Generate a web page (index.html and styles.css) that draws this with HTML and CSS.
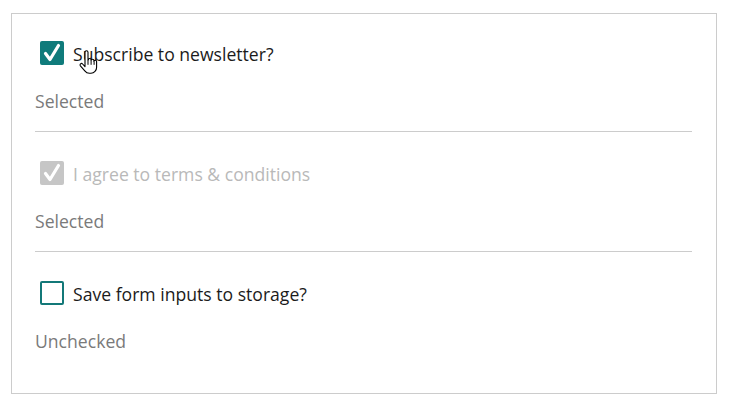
FILE: index.html
```html
<!DOCTYPE html>
<html lang="en">
<head>
<meta charset="utf-8">
<title>Checkboxes</title>
<link rel="stylesheet" href="styles.css">
</head>
<body>
<div class="card">
  <div class="item">
    <label class="check">
      <span class="box box-on">
        <svg viewBox="0 0 24 24" width="24" height="24"><path d="M5.5 12.5 L10 18.5 L18.5 4.5" fill="none" stroke="#fff" stroke-width="3.2" stroke-linecap="round" stroke-linejoin="round"/></svg>
      </span>
      <span class="label">Subscribe to newsletter?</span>
      <svg class="cursor" viewBox="0 0 20 24" width="20" height="24">
        <path d="M6 2.2c0-.9.7-1.5 1.5-1.5S9 1.3 9 2.2V10l.3-.1c0-.9.6-1.4 1.4-1.4s1.4.6 1.4 1.4v.5c.1-.8.7-1.2 1.4-1.2.8 0 1.4.6 1.4 1.4v.6c.2-.6.7-1 1.3-1 .8 0 1.4.6 1.4 1.4v5.6c0 3.4-2.4 6-5.6 6h-1.6c-2 0-3.4-.8-4.6-2.4L1.4 15.8c-.5-.6-.4-1.5.2-2 .6-.5 1.5-.4 2 .2L6 16.6z" fill="#fff" stroke="#000" stroke-width="1.1" stroke-linejoin="round"/>
        <path d="M9 10.2v4.6M12.1 10.6v4.2M15.1 11.2v3.6" stroke="#000" stroke-width="1" fill="none"/>
      </svg>
    </label>
    <div class="status">Selected</div>
  </div>
  <div class="item">
    <label class="check disabled">
      <span class="box box-dis">
        <svg viewBox="0 0 24 24" width="24" height="24"><path d="M5.5 12.5 L10 18.5 L18.5 4.5" fill="none" stroke="#fff" stroke-width="3.2" stroke-linecap="round" stroke-linejoin="round"/></svg>
      </span>
      <span class="label">I agree to terms &amp; conditions</span>
    </label>
    <div class="status">Selected</div>
  </div>
  <div class="item">
    <label class="check">
      <span class="box box-off"></span>
      <span class="label">Save form inputs to storage?</span>
    </label>
    <div class="status">Unchecked</div>
  </div>
</div>
</body>
</html>
```
FILE: styles.css
```css
html, body {
  margin: 0;
  padding: 0;
  background: #fff;
}
body {
  font-family: "Open Sans", "Noto Sans", sans-serif;
  padding: 13px 0 0 11px;
}
.card {
  width: 657px;
  border: 1px solid #cccccc;
  padding: 27px 24px 40px 23px;
}
.item {
  padding: 29px 0 18px;
  border-bottom: 1px solid #cccccc;
}
.item:first-child {
  padding-top: 0;
}
.item:last-child {
  border-bottom: none;
  padding-bottom: 0;
}
.check {
  position: relative;
  display: flex;
  align-items: center;
  height: 24px;
  padding-left: 5px;
}
.box {
  width: 24px;
  height: 24px;
  box-sizing: border-box;
  border-radius: 2px;
  flex: none;
  display: block;
}
.box svg { display: block; }
.box-on { background: #0f7b7b; }
.box-dis { background: #c6c6c6; }
.box-off { border: 2px solid #137878; background: #fff; }
.label {
  margin-left: 9px;
  font-size: 17.6px;
  color: #1b1b1b;
  line-height: 24px;
  position: relative;
  top: 1px;
}
.disabled .label { color: #b9b9b9; }
.status {
  margin-top: 24px;
  font-size: 17.6px;
  line-height: 24px;
  color: #7a7a7a;
}
.cursor {
  position: absolute;
  left: 44px;
  top: 9px;
}
```
